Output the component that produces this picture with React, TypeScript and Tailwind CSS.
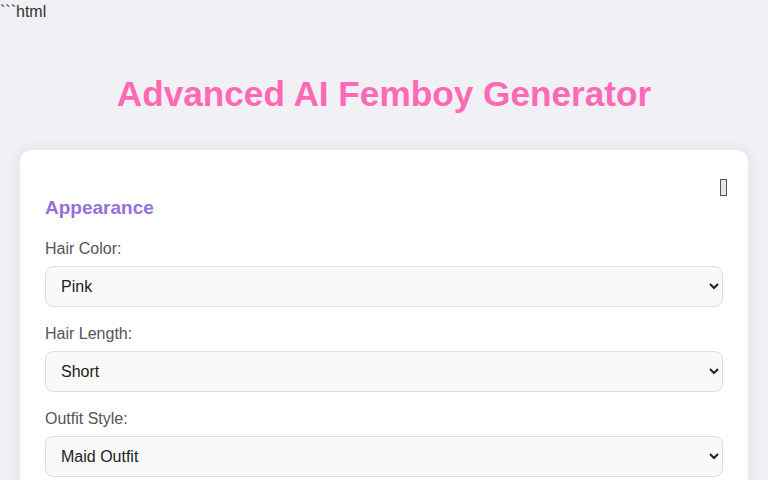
const fields = [
  { label: "Hair Color:", options: ["Pink", "Blonde", "Black", "Brown", "White", "Blue", "Purple"] },
  { label: "Hair Length:", options: ["Short", "Medium", "Long"] },
  { label: "Outfit Style:", options: ["Maid Outfit", "School Uniform", "Casual", "Hoodie & Skirt"] },
];

export default function App() {
  return (
    <div className="min-h-screen bg-[#f0f0f5] text-[#333] font-['Liberation_Sans',Arial,sans-serif]">
      <div className="h-6 leading-6 text-base">```html</div>

      <div className="px-5">
        <h1 className="mt-[49px] mb-[35px] text-center text-[35.2px] leading-[42px] font-bold text-[#ff69b4]">
          Advanced AI Femboy Generator
        </h1>

        <div className="relative rounded-xl bg-white px-[25px] pt-[46px] pb-6 shadow-[0_0_15px_rgba(0,0,0,0.08)]">
          {/* close / settings icon (missing glyph) */}
          <span className="absolute right-[21px] top-[29px] block h-[17px] w-[7px] border border-[#555] bg-[#e5e5e5]" />

          <h2 className="mb-[21px] text-[19px] leading-[23px] font-bold text-[#9370db]">Appearance</h2>

          {fields.map((f) => (
            <div key={f.label} className="mb-[18px]">
              <label className="mb-[8px] block text-base leading-[18px] text-[#555]">{f.label}</label>
              <select className="block h-[41px] w-full rounded-lg border border-[#ddd] bg-[#f9f9f9] px-[11px] text-base text-[#222]">
                {f.options.map((o) => (
                  <option key={o}>{o}</option>
                ))}
              </select>
            </div>
          ))}
        </div>
      </div>
    </div>
  );
}
